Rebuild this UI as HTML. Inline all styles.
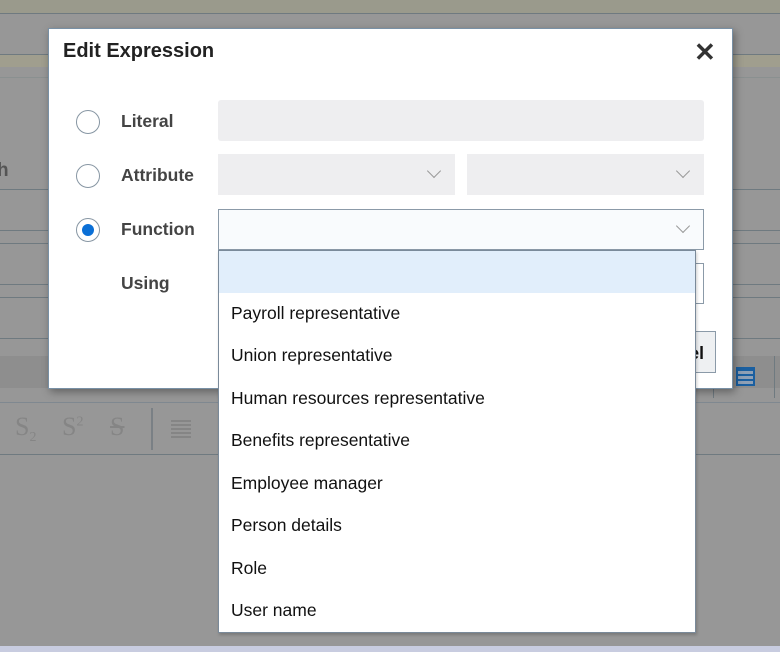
<!DOCTYPE html>
<html><head><style>
*{margin:0;padding:0;box-sizing:border-box}
body{width:780px;height:652px;position:relative;overflow:hidden;background:#979797;font-family:"Liberation Sans",Arial,sans-serif}
.a{position:absolute}
.hl{position:absolute;left:0;width:780px;height:1px;background:#6f7a80}
.lbl{position:absolute;left:121px;font-weight:bold;font-size:17.5px;color:#444}
.rad{position:absolute;left:76px;width:24px;height:24px;border-radius:50%;border:1px solid #8796a3;background:#fff}
.chev{position:absolute;width:10px;height:10px;border-right:1.5px solid #999;border-bottom:1.5px solid #999;transform:rotate(45deg)}
.it{position:absolute;left:12px;font-size:17.5px;color:#111}
</style></head><body>
<div class="a" style="left:0;top:0;width:780px;height:13px;background:#9a9a8c"></div>
<div class="hl" style="top:13px"></div>
<div class="hl" style="top:54px"></div>
<div class="a" style="left:0;top:55px;width:780px;height:12px;background:#a09e8e"></div>
<div class="hl" style="top:77px;background:#8a9090"></div>
<div class="hl" style="top:189px"></div>
<div class="hl" style="top:230px"></div>
<div class="hl" style="top:243px"></div>
<div class="hl" style="top:284px"></div>
<div class="hl" style="top:297px"></div>
<div class="hl" style="top:338px"></div>
<div class="a" style="left:0;top:356px;width:780px;height:32px;background:#8e8e8e"></div>
<div class="hl" style="top:402px;background:#7f8890"></div>
<div class="hl" style="top:454px"></div>
<div class="a" style="left:0;top:160px;font-size:19px;font-weight:bold;color:#555;left:-3px">h</div>
<div class="a" style="left:15px;top:412px;font-family:'Liberation Serif',serif;font-size:26px;color:#858585">S<sub style="font-size:14px">2</sub></div>
<div class="a" style="left:62px;top:412px;font-family:'Liberation Serif',serif;font-size:26px;color:#858585">S<sup style="font-size:14px">2</sup></div>
<div class="a" style="left:110px;top:412px;font-family:'Liberation Serif',serif;font-size:26px;color:#858585;text-decoration:line-through">S</div>
<div class="a" style="left:151px;top:408px;width:2px;height:42px;background:#7a8085"></div>
<div class="a" style="left:171px;top:420px;width:20px;height:18px;background:repeating-linear-gradient(#858585 0 2px,transparent 2px 4px)"></div>
<div class="a" style="left:736px;top:367px;width:19px;height:19px;border:2px solid #1a5fa0;background:repeating-linear-gradient(#1a5fa0 0 2px,#8fa0b5 2px 5px)"></div>
<div class="a" style="left:713px;top:356px;width:1px;height:42px;background:#6f7a80"></div>
<div class="a" style="left:774px;top:356px;width:1px;height:42px;background:#6f7a80"></div>
<div class="a" style="left:0;top:646px;width:780px;height:6px;background:#c8cce0"></div>

<div class="a" style="left:48px;top:28px;width:685px;height:361px;background:#fff;border:1px solid #7890a5;box-shadow:2px 3px 8px rgba(0,0,0,.35)">
 <div class="a" style="left:14px;top:11px;font-size:20px;font-weight:bold;color:#222">Edit Expression</div>
 <div class="a" style="left:645px;top:8px;font-size:26px;font-weight:bold;color:#333">✕</div>
</div>
<div class="rad" style="top:110px"></div>
<div class="rad" style="top:164px"></div>
<div class="rad" style="top:218px"><div class="a" style="left:5px;top:5px;width:12px;height:12px;border-radius:50%;background:#0a6fd6"></div></div>
<div class="lbl" style="top:111px">Literal</div>
<div class="lbl" style="top:165px">Attribute</div>
<div class="lbl" style="top:219px">Function</div>
<div class="lbl" style="top:273px">Using</div>
<div class="a" style="left:218px;top:100px;width:486px;height:41px;background:#eeeef0;border-radius:3px"></div>
<div class="a" style="left:218px;top:154px;width:237px;height:41px;background:#eeeef0"><div class="chev" style="left:211px;top:12px"></div></div>
<div class="a" style="left:467px;top:154px;width:237px;height:41px;background:#eeeef0"><div class="chev" style="left:211px;top:12px"></div></div>
<div class="a" style="left:218px;top:209px;width:486px;height:41px;background:#f9fbfd;border:1px solid #8b9aa8"><div class="chev" style="left:459px;top:11px"></div></div>
<div class="a" style="left:218px;top:263px;width:486px;height:41px;border:1px solid #8b9aa8;background:#fff"></div>
<div class="a" style="left:620px;top:331px;width:96px;height:42px;border:1px solid #8b9aa8;background:#eef0f2;font-size:17.5px;font-weight:bold;color:#111;padding-top:11px;padding-right:11px;text-align:right;overflow:hidden;white-space:nowrap">Cancel</div>

<div class="a" style="left:218px;top:250px;width:478px;height:383px;background:#fff;border:1px solid #7a8a9a;box-shadow:1px 2px 3px rgba(0,0,0,.2)">
 <div class="a" style="left:0;top:0;width:476px;height:42px;background:#e1eefb"></div>
 <div class="it" style="top:52px">Payroll representative</div>
 <div class="it" style="top:94px">Union representative</div>
 <div class="it" style="top:137px">Human resources representative</div>
 <div class="it" style="top:179px">Benefits representative</div>
 <div class="it" style="top:222px">Employee manager</div>
 <div class="it" style="top:264px">Person details</div>
 <div class="it" style="top:307px">Role</div>
 <div class="it" style="top:349px">User name</div>
</div>
</body></html>
